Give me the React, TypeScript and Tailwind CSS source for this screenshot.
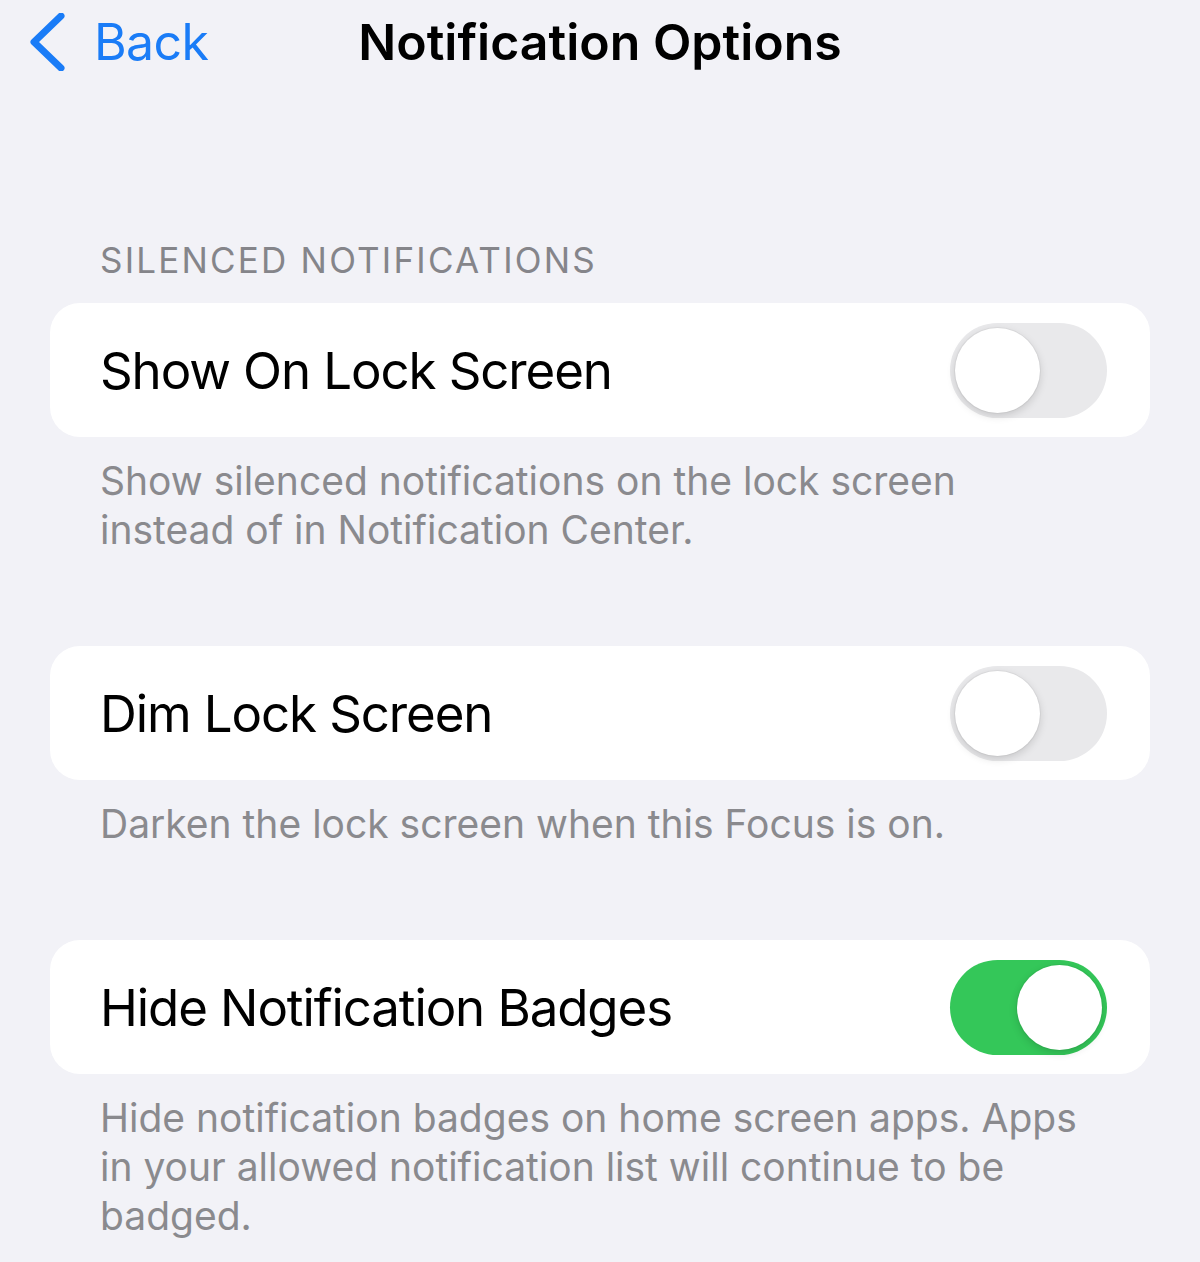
import { ReactNode } from "react";

type Row = {
	label: string;
	on: boolean;
	footer: ReactNode;
};

const ROWS: Row[] = [
	{
		label: "Show On Lock Screen",
		on: false,
		footer: (
			<>
				Show silenced notifications on the lock screen
				<br />
				instead of in Notification Center.
			</>
		),
	},
	{
		label: "Dim Lock Screen",
		on: false,
		footer: "Darken the lock screen when this Focus is on.",
	},
	{
		label: "Hide Notification Badges",
		on: true,
		footer: (
			<>
				Hide notification badges on home screen apps. Apps
				<br />
				in your allowed notification list will continue to be
				<br />
				badged.
			</>
		),
	},
];

function Toggle({ on }: { on: boolean }) {
	return (
		<div
			className={
				on
					? "flex h-[95px] w-[157px] items-center justify-end rounded-full bg-[#34c759] px-[5px]"
					: "flex h-[95px] w-[157px] items-center justify-start rounded-full bg-[#e9e9eb] px-[5px]"
			}
		>
			<span className="h-[85px] w-[85px] rounded-full bg-white shadow-[0_3px_8px_rgba(0,0,0,0.15),0_0_0_1px_rgba(0,0,0,0.04)]" />
		</div>
	);
}

function Section({ row }: { row: Row }) {
	return (
		<div>
			<div className="flex h-[134px] items-center justify-between rounded-[30px] bg-white pr-[43px] pl-[50px]">
				<span className="text-[51px] leading-none tracking-[-1.1px] text-black">
					{row.label}
				</span>
				<Toggle on={row.on} />
			</div>
			<p className="mt-[19px] px-[50px] text-[39px] leading-[49px] text-[#8a8a8e]">
				{row.footer}
			</p>
		</div>
	);
}

export default function App() {
	return (
		<div
			className="min-h-[1262px] w-[1200px] overflow-hidden bg-[#f2f2f7]"
			style={{ fontFamily: "Inter, 'Liberation Sans', sans-serif" }}
		>
			<header className="grid h-[84px] grid-cols-[1fr_auto_1fr] items-center">
				<div className="flex items-center gap-[28px] pl-[30px] text-[#1a7cf7]">
					<svg width="36" height="58" viewBox="0 0 36 58" fill="none">
						<path
							d="M31 3 L4 29 L31 55"
							stroke="currentColor"
							strokeWidth="7"
							strokeLinecap="round"
							strokeLinejoin="round"
						/>
					</svg>
					<span className="text-[50px] leading-none tracking-[-0.6px]">Back</span>
				</div>
				<h1 className="text-[50px] leading-none font-semibold text-black">
					Notification Options
				</h1>
				<div />
			</header>

			<main className="px-[50px] pt-[159px]">
				<h2 className="px-[50px] text-[35px] leading-none tracking-[2.2px] text-[#85858a] uppercase">
					Silenced Notifications
				</h2>
				<div className="mt-[25px] flex flex-col gap-[92px]">
					{ROWS.map((row) => (
						<Section key={row.label} row={row} />
					))}
				</div>
			</main>
		</div>
	);
}
